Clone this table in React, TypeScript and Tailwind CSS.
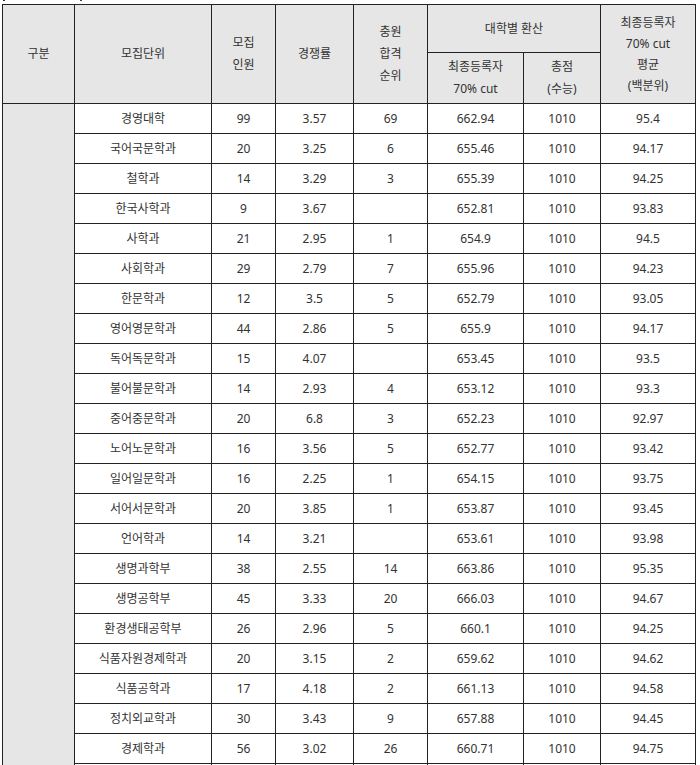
import React from 'react';

const rows: [string, string, string, string, string, string, string][] = [
  ['경영대학', '99', '3.57', '69', '662.94', '1010', '95.4'],
  ['국어국문학과', '20', '3.25', '6', '655.46', '1010', '94.17'],
  ['철학과', '14', '3.29', '3', '655.39', '1010', '94.25'],
  ['한국사학과', '9', '3.67', '', '652.81', '1010', '93.83'],
  ['사학과', '21', '2.95', '1', '654.9', '1010', '94.5'],
  ['사회학과', '29', '2.79', '7', '655.96', '1010', '94.23'],
  ['한문학과', '12', '3.5', '5', '652.79', '1010', '93.05'],
  ['영어영문학과', '44', '2.86', '5', '655.9', '1010', '94.17'],
  ['독어독문학과', '15', '4.07', '', '653.45', '1010', '93.5'],
  ['불어불문학과', '14', '2.93', '4', '653.12', '1010', '93.3'],
  ['중어중문학과', '20', '6.8', '3', '652.23', '1010', '92.97'],
  ['노어노문학과', '16', '3.56', '5', '652.77', '1010', '93.42'],
  ['일어일문학과', '16', '2.25', '1', '654.15', '1010', '93.75'],
  ['서어서문학과', '20', '3.85', '1', '653.87', '1010', '93.45'],
  ['언어학과', '14', '3.21', '', '653.61', '1010', '93.98'],
  ['생명과학부', '38', '2.55', '14', '663.86', '1010', '95.35'],
  ['생명공학부', '45', '3.33', '20', '666.03', '1010', '94.67'],
  ['환경생태공학부', '26', '2.96', '5', '660.1', '1010', '94.25'],
  ['식품자원경제학과', '20', '3.15', '2', '659.62', '1010', '94.62'],
  ['식품공학과', '17', '4.18', '2', '661.13', '1010', '94.58'],
  ['정치외교학과', '30', '3.43', '9', '657.88', '1010', '94.45'],
  ['경제학과', '56', '3.02', '26', '660.71', '1010', '94.75'],
  ['', '', '', '', '', '', ''],
];

const th = 'border border-[#222] bg-[#e6e6e6] font-normal text-center align-middle p-0';
const td = 'border border-[#222] text-center align-middle p-0 h-[30px]';

export default function App() {
  return (
    <div className="bg-white min-h-screen text-[12px] text-[#333] font-['Noto_Sans','Noto_Sans_CJK_KR',sans-serif]">
      {/* clipped title above the table */}
      <div className="flex h-[4px] items-start">
        <span className="ml-[3px] w-[2px] h-[1px] bg-[#1c2a66]" />
        <span className="ml-[75px] w-[2px] h-[1px] bg-[#5a3a1a]" />
      </div>

      <table className="ml-[2px] border-collapse table-fixed w-[693px] leading-[22px]">
        <colgroup>
          <col className="w-[72px]" />
          <col className="w-[137px]" />
          <col className="w-[64px]" />
          <col className="w-[78px]" />
          <col className="w-[74px]" />
          <col className="w-[96px]" />
          <col className="w-[77px]" />
          <col className="w-[95px]" />
        </colgroup>
        <thead>
          <tr className="h-[48px]">
            <th rowSpan={2} className={th}>구분</th>
            <th rowSpan={2} className={th}>모집단위</th>
            <th rowSpan={2} className={th}>모집<br />인원</th>
            <th rowSpan={2} className={th}>경쟁률</th>
            <th rowSpan={2} className={th}>충원<br />합격<br />순위</th>
            <th colSpan={2} className={th}>대학별 환산</th>
            <th rowSpan={2} className={`${th} leading-[21px]`}>
              최종등록자<br />70% cut<br />평균<br />(백분위)
            </th>
          </tr>
          <tr className="h-[51px]">
            <th className={th}>최종등록자<br />70% cut</th>
            <th className={th}>총점<br />(수능)</th>
          </tr>
        </thead>
        <tbody>
          {rows.map((r, i) => (
            <tr key={i}>
              {i === 0 && (
                <td rowSpan={rows.length} className="border border-[#222] bg-[#e6e6e6] p-0" />
              )}
              {r.map((c, j) => (
                <td key={j} className={td}>{c}</td>
              ))}
            </tr>
          ))}
        </tbody>
      </table>
    </div>
  );
}
